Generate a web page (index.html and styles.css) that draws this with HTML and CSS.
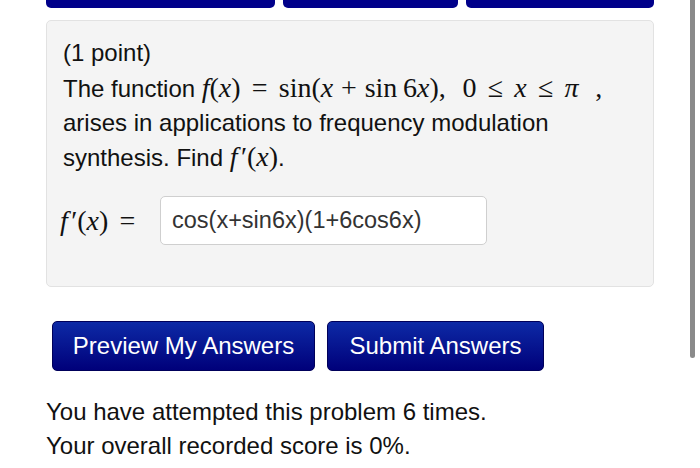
FILE: index.html
```html
<!DOCTYPE html>
<html>
<head>
<title>Problem</title>
<link rel="stylesheet" href="styles.css">
</head>
<body>

<div class="page">
  <div class="top-nav">
    <span class="nav-btn nav-1"></span>
    <span class="nav-btn nav-2"></span>
    <span class="nav-btn nav-3"></span>
  </div>

  <div class="problem">
    <div class="line">(1 point)</div>
    <div class="line math-line">The function <span class="m"><i>f</i>(<i>x</i>)<span class="rel">=</span>sin(<i>x</i><span class="bin">+</span>sin&#8201;6<i>x</i>),<span class="gap"></span>0<span class="rel">&le;</span><i>x</i><span class="rel">&le;</span><i>&pi;</i><span class="gap"></span>,</span></div>
    <div class="line">arises in applications to frequency modulation</div>
    <div class="line">synthesis. Find <span class="m"><i>f</i><span class="prime">&prime;</span>(<i>x</i>)</span>.</div>

    <div class="answer-row">
      <span class="m label"><i>f</i><span class="prime">&prime;</span>(<i>x</i>)<span class="rel">=</span></span>
      <input type="text" class="answer" value="cos(x+sin6x)(1+6cos6x)">
    </div>
  </div>

  <div class="actions">
    <button class="button preview">Preview My Answers</button>
    <button class="button submit">Submit Answers</button>
  </div>

  <div class="attempts">
    <div>You have attempted this problem 6 times.</div>
    <div>Your overall recorded score is 0%.</div>
  </div>
</div>

<div class="scrollbar"></div>

</body>
</html>
```

FILE: styles.css
```css
body {
  margin: 0;
  font-family: "Liberation Sans", Arial, sans-serif;
  background-color: #fff;
  color: #111;
}

.page {
  width: 608px;
  margin-left: 46px;
}

.top-nav {
  display: flex;
  gap: 8px;
  height: 8px;
}

.nav-btn {
  display: block;
  height: 8px;
  background-color: #00008a;
  border-radius: 0 0 5px 5px;
}

.nav-1 { width: 229px; }
.nav-2 { width: 175px; }
.nav-3 { width: 188px; }

.problem {
  margin-top: 12px;
  background-color: #f4f4f4;
  border: 1px solid #e2e2e2;
  border-radius: 5px;
  padding: 15px 16px 41px 16px;
  font-size: 24px;
}

.line {
  line-height: 34px;
}

.math-line {
  line-height: 35px;
}

.m {
  font-family: "Liberation Serif", "Times New Roman", serif;
  font-size: 28px;
}

.prime {
  margin-left: 0.12em;
}

.rel {
  margin: 0 0.4em;
}

.bin {
  margin: 0 0.28em;
}

.gap {
  display: inline-block;
  width: 0.6em;
}

.answer-row {
  display: flex;
  align-items: center;
  margin-top: 21px;
}

.label {
  width: 100px;
  margin-left: -3px;
}

.answer {
  width: 327px;
  height: 49px;
  box-sizing: border-box;
  padding: 0 11px;
  font-family: "Liberation Sans", Arial, sans-serif;
  font-size: 23.5px;
  color: #333;
  background-color: #fff;
  border: 1px solid #cfcfcf;
  border-radius: 5px;
}

.actions {
  display: flex;
  gap: 12px;
  margin-top: 34px;
  margin-left: 6px;
}

.button {
  height: 50px;
  padding: 0 10px;
  font-family: "Liberation Sans", Arial, sans-serif;
  font-size: 24px;
  color: white;
  background: linear-gradient(#0d2aa6, #00007a);
  border: 1px solid #00005a;
  border-radius: 5px;
  cursor: pointer;
}

.preview { width: 263px; }
.submit { width: 217px; }

.attempts {
  margin-top: 24px;
  font-size: 24px;
  line-height: 34px;
  color: #111;
}

.scrollbar {
  position: fixed;
  top: 0;
  left: 690px;
  width: 5px;
  height: 358px;
  background-color: #8a8a8a;
  border-radius: 0 0 3px 3px;
}
```
